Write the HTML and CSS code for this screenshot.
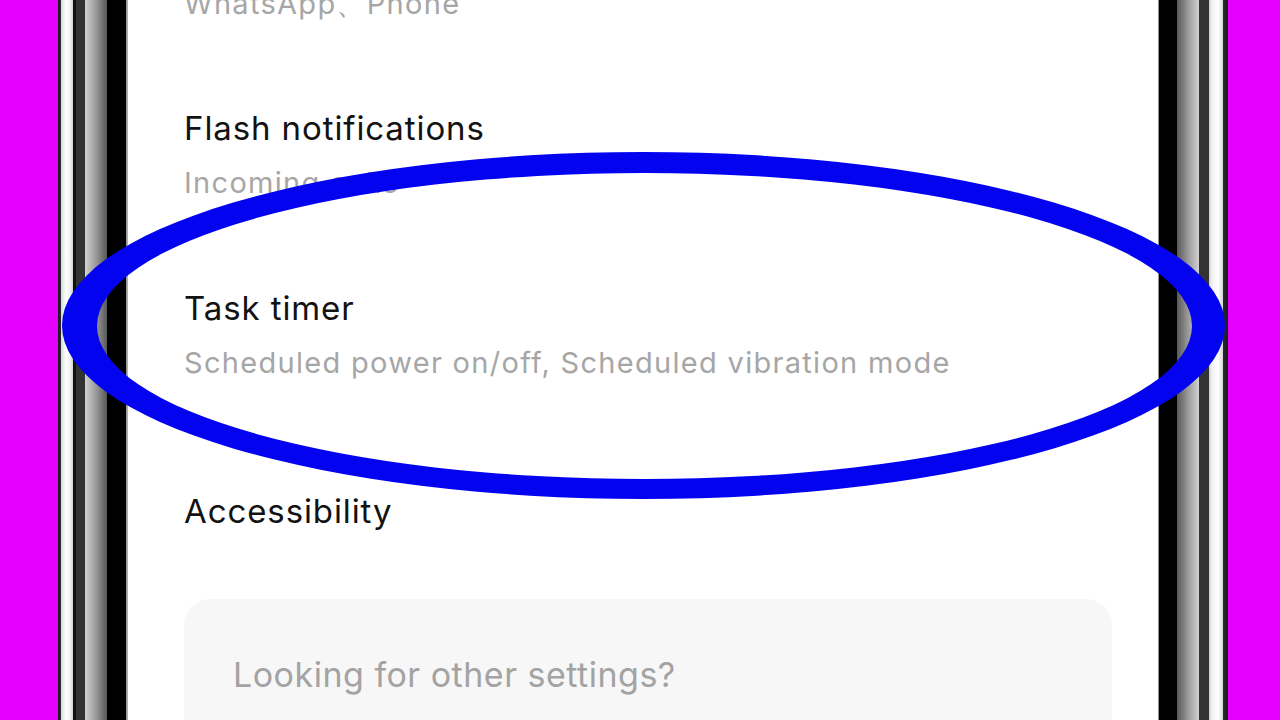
FILE: index.html
```html
<!DOCTYPE html>
<html lang="en">
<head>
<meta charset="utf-8">
<title>Settings</title>
<link rel="stylesheet" href="styles.css">
</head>
<body>
<div class="stage">
  <div class="side side-left"></div>
  <div class="bezel bezel-left"></div>
  <main class="screen">
    <div class="sub first">WhatsApp、Phone</div>
    <section class="row row-flash">
      <div class="title">Flash notifications</div>
      <div class="sub">Incoming calls</div>
    </section>
    <section class="row row-task">
      <div class="title">Task timer</div>
      <div class="sub">Scheduled power on/off, Scheduled vibration mode</div>
    </section>
    <section class="row row-access">
      <div class="title">Accessibility</div>
    </section>
    <div class="card">
      <div class="card-text">Looking for other settings?</div>
    </div>
  </main>
  <div class="bezel bezel-right"></div>
  <div class="side side-right"></div>
  <svg class="ring" width="1280" height="720" viewBox="0 0 1280 720" aria-hidden="true">
    <path fill="#0303f0" fill-rule="evenodd" d="M62 325.5 A581.5 173.5 0 1 0 1225 325.5 A581.5 173.5 0 1 0 62 325.5 Z M97 326 A547.5 153 0 1 0 1192 326 A547.5 153 0 1 0 97 326 Z"/>
  </svg>
</div>
</body>
</html>
```

FILE: styles.css
```css
* { box-sizing: border-box; }
html, body {
  margin: 0;
  padding: 0;
  width: 1280px;
  height: 720px;
  overflow: hidden;
  background: #e600ff;
}
.stage {
  position: relative;
  display: flex;
  width: 1280px;
  height: 720px;
  font-family: Inter, Roboto, "Noto Sans", sans-serif;
}
.side { background: #e600ff; }
.side-left { width: 58px; flex: none; }
.side-right { width: 52px; flex: none; }
.bezel { width: 70px; flex: none; }
.bezel-left {
  background: linear-gradient(to right,
    #1c1c1c 0px, #2a2a2a 3px,
    #d8d8d8 3px, #ffffff 8px, #f2f2f2 12px, #cfcfcf 15px,
    #111111 15px, #111111 18px,
    #333333 18px, #333333 27px,
    #d2d2d2 27px, #9a9a9a 38px, #585858 49px,
    #000000 49px, #000000 68px,
    #8a8a8a 68px, #bdbdbd 70px);
}
.bezel-right {
  background: linear-gradient(to right,
    #a0a0a0 0px, #777777 1.5px,
    #000000 1.5px, #000000 19px,
    #585858 19px, #9a9a9a 30px, #d2d2d2 41px,
    #333333 41px, #333333 51px,
    #cfcfcf 51px, #f2f2f2 54px, #ffffff 60px, #d8d8d8 64.7px,
    #2a2a2a 64.7px, #1c1c1c 70px);
}
.screen {
  width: 1030px;
  flex: none;
  background: #ffffff;
  padding: 0 46px 0 56px;
  overflow: hidden;
}
.title {
  font-size: 33px;
  line-height: 40px;
  letter-spacing: 0.9px;
  color: #121212;
  white-space: nowrap;
}
.sub {
  font-size: 29px;
  line-height: 36px;
  letter-spacing: 1.3px;
  color: #a6a6a6;
  white-space: nowrap;
}
.row .sub { margin-top: 17px; }
.sub.first { margin-top: -14px; }
.row-flash { margin-top: 86px; }
.row-task { margin-top: 87px; }
.row-access { margin-top: 110px; }
.card {
  margin-top: 68px;
  height: 200px;
  background: #f7f7f7;
  border-radius: 26px;
  padding: 56px 0 0 49px;
}
.card-text {
  font-size: 34px;
  line-height: 40px;
  letter-spacing: 0.5px;
  color: #a3a3a3;
  white-space: nowrap;
}
.ring {
  position: absolute;
  left: 0;
  top: 0;
  pointer-events: none;
}
```
